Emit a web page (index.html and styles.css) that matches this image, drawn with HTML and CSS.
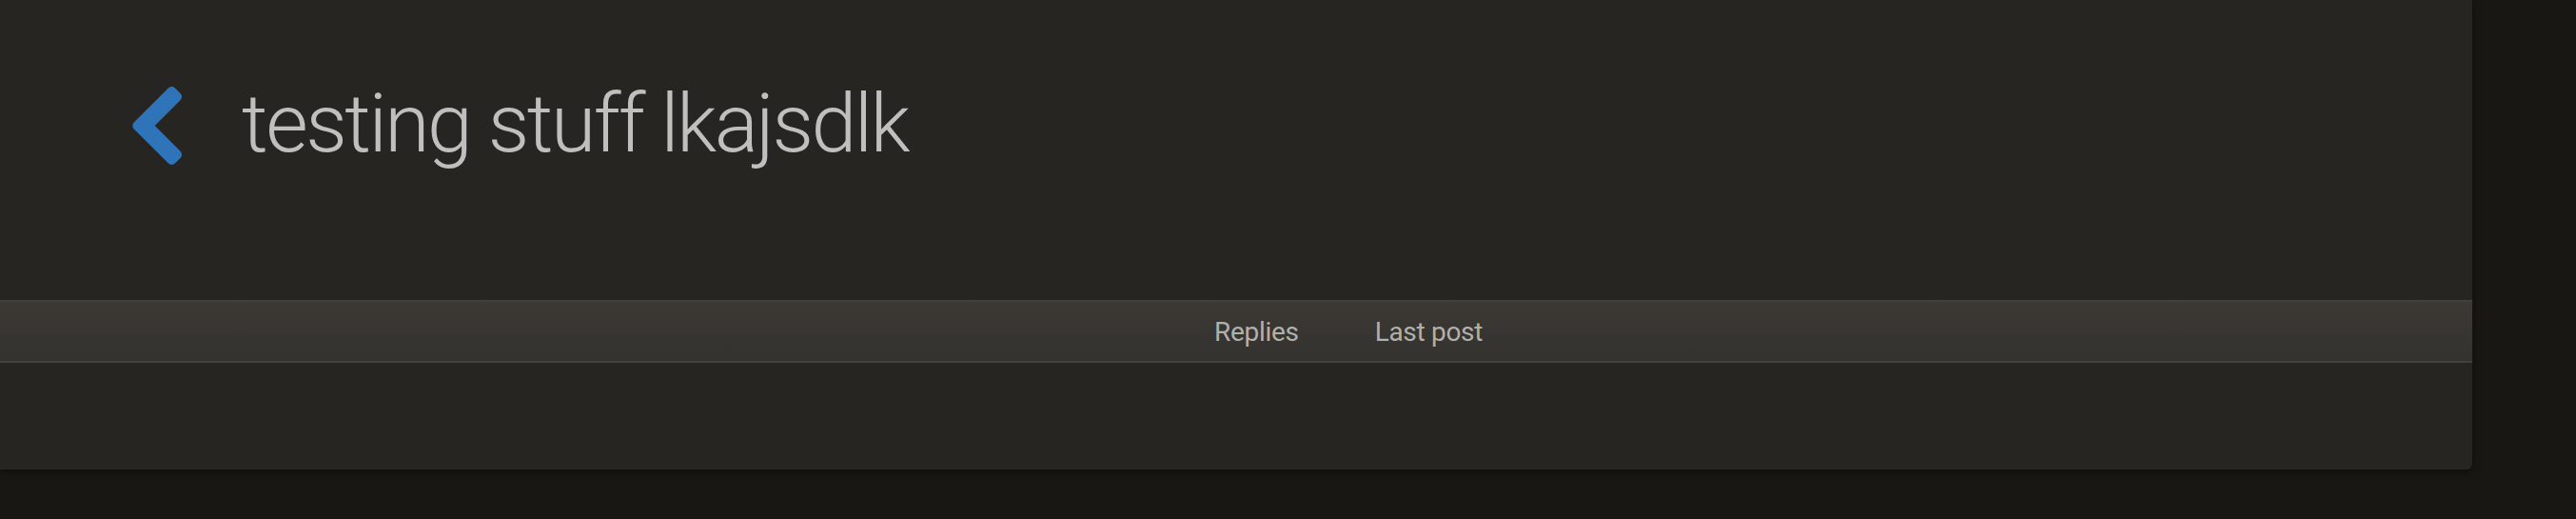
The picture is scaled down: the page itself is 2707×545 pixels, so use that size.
FILE: index.html
```html
<!DOCTYPE html>
<html lang="en">
<head>
<meta charset="utf-8">
<title>testing stuff lkajsdlk</title>
<link rel="stylesheet" href="styles.css">
</head>
<body>
<div class="panel">
  <header class="topic-head">
    <a class="back" href="#" aria-label="Back">
      <svg class="back-icon" viewBox="130 85 70 95" width="70" height="95">
        <path d="M144.3,132 L180.4,96 L186,101.6 L155.7,132 L186,162.4 L180.4,168 Z" fill="#2f73b9" stroke="#2f73b9" stroke-width="10" stroke-linejoin="round"/>
      </svg>
    </a>
    <h1 class="title">testing stuff lkajsdlk</h1>
  </header>
  <div class="list-head">
    <div class="col col-topic"></div>
    <div class="col col-replies">Replies</div>
    <div class="col col-last">Last post</div>
    <div class="col col-rest"></div>
  </div>
  <div class="list-body"></div>
</div>
</body>
</html>
```
FILE: styles.css
```css
html, body {
  margin: 0;
  padding: 0;
}
body {
  background: #181714;
  font-family: Roboto, "Liberation Sans", sans-serif;
  height: 545px;
  overflow: hidden;
}
.panel {
  width: 2598px;
  height: 493px;
  background: #262521;
  border-bottom-right-radius: 6px;
  box-shadow: 0 2px 8px rgba(0, 0, 0, 0.45);
  display: flex;
  flex-direction: column;
}
.topic-head {
  height: 315px;
  display: flex;
  align-items: flex-start;
}
.back {
  display: block;
  margin-left: 130px;
  margin-top: 85px;
  width: 70px;
  height: 95px;
}
.back-icon {
  display: block;
}
.title {
  margin: 0;
  margin-left: 54px;
  margin-top: 80px;
  font-size: 86px;
  font-weight: 300;
  line-height: 100px;
  letter-spacing: -2.5px;
  color: #c0bfbd;
  white-space: nowrap;
}
.list-head {
  height: 62px;
  border-top: 2px solid #43413e;
  border-bottom: 2px solid #42413f;
  background: linear-gradient(to bottom, #3c3934, #33322f);
  display: flex;
  align-items: center;
  font-size: 28px;
  letter-spacing: -0.3px;
  color: #b2b0ab;
}
.col-topic {
  width: 1276px;
}
.col-last {
  margin-left: 80px;
}
.col-rest {
  flex: 1;
}
.list-body {
  flex: 1;
}
```
